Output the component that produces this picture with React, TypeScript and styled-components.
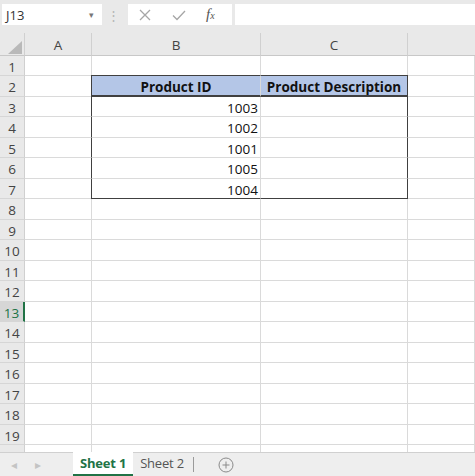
import React from "react"
import styled, { createGlobalStyle } from "styled-components"

const GlobalStyle = createGlobalStyle`
  html, body {
    margin:0;
    padding:0;
    background:#fff;
    overflow:hidden;
  }
  body {
    font-family:"Open Sans","Liberation Sans",sans-serif;
  }
`

const columns = ['A','B','C','']
const ids = ['1003','1002','1001','1005','1004']
const rowCount = 20

export default function App(){
  const rows = Array.from({length: rowCount}, (_, i) => i + 1)

  // col: 1 = A, 2 = B, 3 = C ...
  function renderCell(row:number, col:number){
    // table lives in B2:C7
    const inTable = row >= 2 && row <= 7 && (col == 2 || col == 3)
    if (!inTable) return <Cell key={row+'-'+col}/>
    const isHead = row == 2
    return <Cell
      key={row+'-'+col}
      head={isHead}
      boxLeft={col == 2}
      boxRight={col == 3}
      boxTop={row == 2}
      boxBottom={row == 7}
      align={isHead ? 'center' : 'right'}
    >
      {isHead ? (col == 2 ? 'Product ID' : 'Product Description') : (col == 2 ? ids[row - 3] : '')}
    </Cell>
  }

  return <Page>
    <GlobalStyle/>
    <FormulaBar>
      <NameBox>
        <span>J13</span>
        <Caret>▾</Caret>
      </NameBox>
      <Grip>⋮</Grip>
      <ActionBox>
        <svg width="14" height="14" viewBox="0 0 14 14"><path d="M2 2L12 12M12 2L2 12" stroke="#a6a6a6" strokeWidth="1.3"/></svg>
        <svg width="16" height="14" viewBox="0 0 16 14"><path d="M2 7.5L6 11.5L14 3" stroke="#a6a6a6" strokeWidth="1.3" fill="none"/></svg>
        <Fx>f<sub>x</sub></Fx>
      </ActionBox>
      <FormulaInput/>
    </FormulaBar>
    <Sheet>
      <Corner>
        <svg width="20" height="16" viewBox="0 0 20 16"><path d="M18 2L18 15L4 15Z" fill="#b9b9b9"/></svg>
      </Corner>
      {columns.map((c, i) => <ColHead key={'col'+i} last={i == columns.length - 1}>{c}</ColHead>)}
      {rows.map(r => <React.Fragment key={'row'+r}>
        <RowHead active={r == 13}>{r}</RowHead>
        {columns.map((_, ci) => renderCell(r, ci + 1))}
      </React.Fragment>)}
    </Sheet>
    <TabBar>
      <Nav>
        <span>◂</span>
        <span>▸</span>
      </Nav>
      <Tab active>Sheet 1</Tab>
      <Tab>Sheet 2</Tab>
      <TabDivider/>
      <AddSheet>
        <svg width="16" height="16" viewBox="0 0 16 16"><circle cx="8" cy="8" r="7" stroke="#8a8a8a" fill="none" strokeWidth="1"/><path d="M8 4.5V11.5M4.5 8H11.5" stroke="#8a8a8a" strokeWidth="1"/></svg>
      </AddSheet>
    </TabBar>
  </Page>
}

const Page = styled.div`
  width:475px;
  height:476px;
  display:flex;
  flex-direction:column;
  background:#e9e9e9;
  overflow:hidden;
`
const FormulaBar = styled.div`
  height:33px;
  flex-shrink:0;
  display:flex;
  align-items:flex-start;
  padding:4px 0 0 2px;
  box-sizing:border-box;
  background:#e9e9e9;
`
const NameBox = styled.div`
  width:100px;
  height:21px;
  background:#fff;
  display:flex;
  align-items:center;
  justify-content:space-between;
  padding:0 8px 0 4px;
  box-sizing:border-box;
  font-family:"Open Sans",sans-serif;
  font-size:13px;
  color:#333;
`
const Caret = styled.span`
  font-size:9px;
  color:#777;
`
const Grip = styled.div`
  width:26px;
  height:21px;
  display:flex;
  align-items:center;
  justify-content:center;
  padding-right:4px;
  box-sizing:border-box;
  color:#b5b5b5;
  font-size:13px;
`
const ActionBox = styled.div`
  width:104px;
  height:21px;
  background:#fff;
  display:flex;
  align-items:center;
  gap:19px;
  padding:0 0 0 10px;
  box-sizing:border-box;
`
const Fx = styled.span`
  font-family:"Liberation Serif",serif;
  font-style:italic;
  font-size:15px;
  color:#555;
  sub {
    font-size:10px;
    vertical-align:baseline;
  }
`
const FormulaInput = styled.div`
  flex:1;
  height:21px;
  margin-left:3px;
  background:#fff;
`
const Sheet = styled.div`
  display:grid;
  grid-template-columns:25px 67px 169px 147px 67px;
  grid-template-rows:22.5px repeat(${rowCount}, 20.5px);
  height:419px;
  flex-shrink:0;
  overflow:hidden;
  background:#fff;
  font-family:"Open Sans",sans-serif;
`
const Corner = styled.div`
  background:#e9e9e9;
  border-right:1px solid #d0d0d0;
  border-bottom:1px solid #c8c8c8;
  box-sizing:border-box;
  display:flex;
  align-items:flex-end;
  justify-content:flex-end;
`
const ColHead = styled.div<{last?:boolean}>`
  background:#e9e9e9;
  border-right:${p => p.last ? 'none' : '1px solid #d0d0d0'};
  border-bottom:1px solid #c8c8c8;
  box-sizing:border-box;
  display:flex;
  align-items:center;
  justify-content:center;
  font-size:13.5px;
  color:#444;
  padding-top:3px;
`
const RowHead = styled.div<{active?:boolean}>`
  background:${p => p.active ? '#d6d6d6' : '#e9e9e9'};
  border-right:${p => p.active ? '2px solid #217346' : '1px solid #d0d0d0'};
  border-bottom:1px solid #d6d6d6;
  box-sizing:border-box;
  display:flex;
  align-items:center;
  justify-content:center;
  padding-top:3px;
  font-size:13.5px;
  color:${p => p.active ? '#217346' : '#444'};
`
const Cell = styled.div<{head?:boolean, boxLeft?:boolean, boxRight?:boolean, boxTop?:boolean, boxBottom?:boolean, align?:string}>`
  box-sizing:border-box;
  border-right:1px solid ${p => p.boxRight ? '#404040' : '#dadada'};
  border-bottom:${p => p.head ? '2px solid #404040' : p.boxBottom ? '1px solid #404040' : '1px solid #dadada'};
  border-left:${p => p.boxLeft ? '1px solid #404040' : 'none'};
  border-top:${p => p.boxTop ? '1px solid #404040' : 'none'};
  margin-left:${p => p.boxLeft ? '-1px' : '0'};
  margin-top:${p => p.boxTop ? '-1px' : '0'};
  background:${p => p.head ? '#b4c6e7' : '#fff'};
  display:flex;
  align-items:center;
  justify-content:${p => p.align == 'right' ? 'flex-end' : 'center'};
  padding:3px 2px 0;
  font-size:13.5px;
  font-weight:${p => p.head ? 700 : 400};
  color:#111;
  white-space:nowrap;
  overflow:hidden;
`
const TabBar = styled.div`
  height:24px;
  flex-shrink:0;
  display:flex;
  align-items:stretch;
  background:#eeeeee;
  border-top:1px solid #d0d0d0;
  box-sizing:border-box;
  font-family:"Open Sans",sans-serif;
`
const Nav = styled.div`
  width:73px;
  display:flex;
  align-items:center;
  gap:18px;
  padding-left:11px;
  box-sizing:border-box;
  color:#c4c4c4;
  font-size:12px;
`
const Tab = styled.div<{active?:boolean}>`
  padding:0 7px;
  display:flex;
  align-items:center;
  background:${p => p.active ? '#fff' : 'transparent'};
  border-bottom:${p => p.active ? '2px solid #217346' : '2px solid transparent'};
  margin-top:-1px;
  color:${p => p.active ? '#217346' : '#555'};
  font-weight:${p => p.active ? 700 : 400};
  font-size:13px;
  letter-spacing:-0.2px;
`
const TabDivider = styled.div`
  width:1px;
  background:#9a9a9a;
  margin:4px 0 4px 2px;
`
const AddSheet = styled.div`
  display:flex;
  align-items:center;
  padding-left:24px;
`
